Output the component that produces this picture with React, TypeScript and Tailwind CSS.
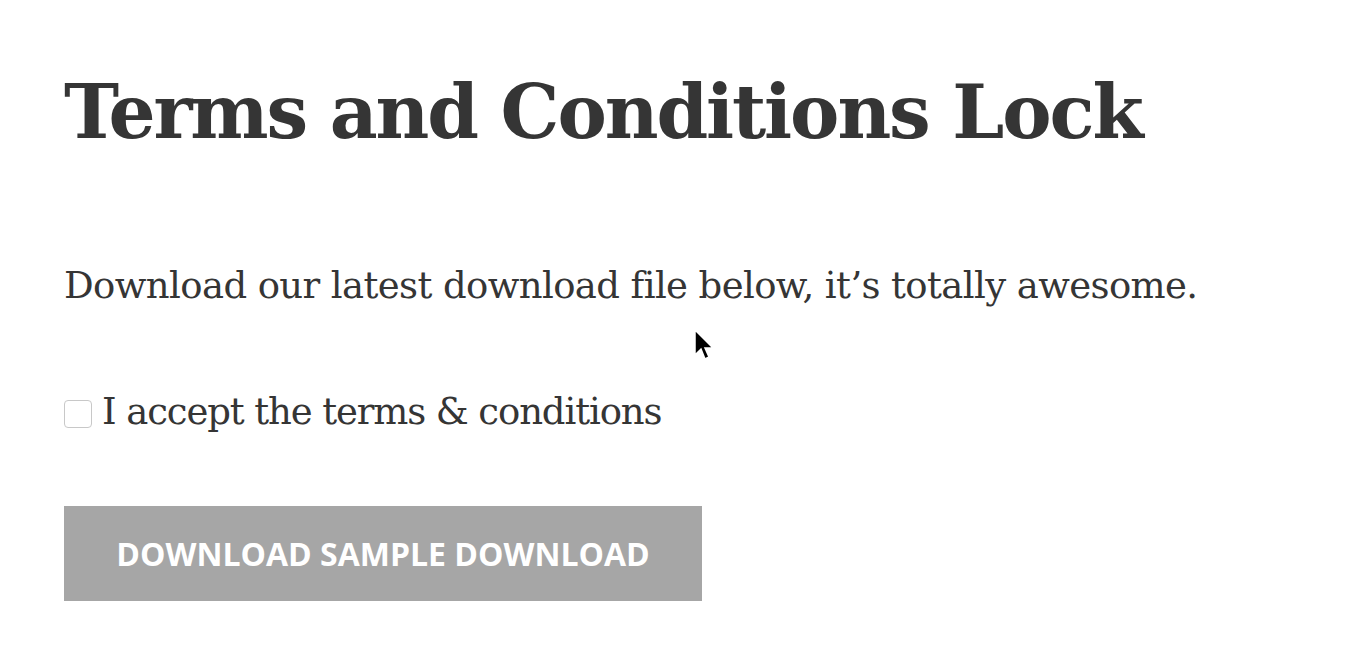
export default function App() {
  return (
    <div className="relative min-h-screen bg-white px-16 pt-[58px] text-[#353535]" style={{ fontFamily: '"DejaVu Serif", serif' }}>
      <h1 className="text-[74px] font-bold leading-[108px] tracking-[-2.1px] whitespace-nowrap">Terms and Conditions Lock</h1>
      <p className="mt-[90px] text-[37px] leading-[60px] tracking-[-0.6px] whitespace-nowrap">
        Download our latest download file below, it’s totally awesome.
      </p>
      <label className="mt-[66px] flex items-center gap-[10px] text-[37px] leading-[60px] tracking-[-1.1px] whitespace-nowrap">
        <span className="mt-[4px] h-[28px] w-[28px] rounded-[4px] border border-[#c8c8c8] bg-white"></span>
        I accept the terms &amp; conditions
      </label>
      <button
        className="mt-[64px] flex h-[95px] w-[638px] items-center justify-center bg-[#a6a6a6] text-[32px] font-bold uppercase text-white"
        style={{ fontFamily: '"Open Sans", sans-serif' }}
      >
        Download Sample Download
      </button>
      <svg className="absolute left-[693px] top-[329px]" width="22" height="36" viewBox="0 0 22 36">
        <path d="M2 1 L2 26 L8 20 L12 30 L16 28 L12 19 L20 19 Z" fill="#000" stroke="#fff" strokeWidth="1.5" />
      </svg>
    </div>
  );
}
